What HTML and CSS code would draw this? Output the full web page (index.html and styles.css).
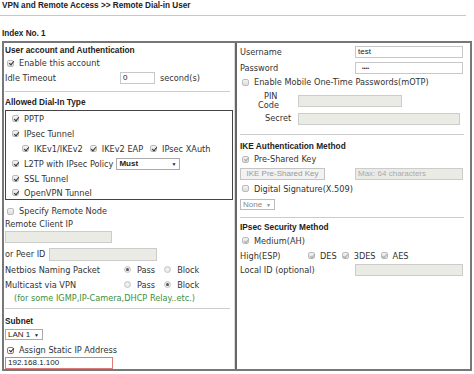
FILE: index.html
```html
<!DOCTYPE html>
<html lang="en">
<head>
  <meta charset="UTF-8">
  <title>Remote Dial-in User</title>
  <link rel="stylesheet" href="styles.css">
</head>
<body>
  <div class="title">VPN and Remote Access &gt;&gt; Remote Dial-in User</div>
  <div class="index">Index No. 1</div>

  <div class="panel">
    <!-- left column -->
    <div class="col left">
      <div class="head h1">User account and Authentication</div>
      <div class="row r14"><span class="cb on"></span>Enable this account</div>
      <div class="row r15">
        <span class="lbl w115">Idle Timeout</span>
        <span class="txt idle">0</span>
        <span class="unit">second(s)</span>
      </div>
      <div class="sep s1"></div>
      <div class="head h2">Allowed Dial-In Type</div>

      <div class="box">
        <div class="row r15"><span class="cb on"></span>PPTP</div>
        <div class="row r15"><span class="cb on"></span>IPsec Tunnel</div>
        <div class="row r15 sub">
          <span class="cb on"></span><span class="opt">IKEv1/IKEv2</span>
          <span class="cb on"></span><span class="opt">IKEv2 EAP</span>
          <span class="cb on"></span>IPsec XAuth
        </div>
        <div class="row r15">
          <span class="cb on"></span>L2TP with IPsec Policy
          <span class="sel must">Must<i>&#9660;</i></span>
        </div>
        <div class="row r15"><span class="cb on"></span>SSL Tunnel</div>
        <div class="row r13"><span class="cb on"></span>OpenVPN Tunnel</div>
      </div>

      <div class="row r14 mt4"><span class="cb"></span>Specify Remote Node</div>
      <div class="row r12">Remote Client IP</div>
      <div class="txt dis ip1"></div>
      <div class="row r14 peer">or Peer ID <span class="txt dis peerid"></span></div>
      <div class="row r15 mt1">
        <span class="lbl w119">Netbios Naming Packet</span>
        <span class="rd on"></span><span class="opt2">Pass</span>
        <span class="rd"></span>Block
      </div>
      <div class="row r15">
        <span class="lbl w119">Multicast via VPN</span>
        <span class="rd"></span><span class="opt2">Pass</span>
        <span class="rd on"></span>Block
      </div>
      <div class="row r12 note">(for some IGMP,IP-Camera,DHCP Relay..etc.)</div>
      <div class="sep s2"></div>
      <div class="head h3">Subnet</div>
      <div class="sel lan">LAN 1<i>&#9660;</i></div>
      <div class="row r14 mt3"><span class="cb on red"></span>Assign Static IP Address</div>
      <div class="txt ipaddr">192.168.1.100</div>
    </div>

    <!-- right column -->
    <div class="col right">
      <div class="row r15">
        <span class="lbl w115">Username</span>
        <span class="txt field">test</span>
      </div>
      <div class="row r15 mt1">
        <span class="lbl w115">Password</span>
        <span class="txt field dots">&bull;&bull;&bull;&bull;</span>
      </div>
      <div class="row r14"><span class="cb"></span>Enable Mobile One-Time Passwords(mOTP)</div>
      <div class="row r23">
        <span class="otp"><span class="pin">PIN</span><br>Code</span>
        <span class="txt dis pinbox"></span>
      </div>
      <div class="row r13">
        <span class="otp secret">Secret</span>
        <span class="txt dis secbox"></span>
      </div>
      <div class="sep s3"></div>
      <div class="head h4">IKE Authentication Method</div>
      <div class="row r14"><span class="cb on off"></span>Pre-Shared Key</div>
      <div class="row r15">
        <span class="btn">IKE Pre-Shared Key</span>
        <span class="txt dis field hint">Max: 64 characters</span>
      </div>
      <div class="row r15"><span class="cb"></span>Digital Signature(X.509)</div>
      <div class="sel none">None<i>&#9660;</i></div>
      <div class="sep s4"></div>
      <div class="head h5">IPsec Security Method</div>
      <div class="row r15"><span class="cb on off"></span>Medium(AH)</div>
      <div class="row r15">
        <span class="lbl w66">High(ESP)</span>
        <span class="cb on off"></span><span class="opt3">DES</span>
        <span class="cb on off"></span><span class="opt3">3DES</span>
        <span class="cb on off"></span>AES
      </div>
      <div class="row r14">
        <span class="lbl w115">Local ID (optional)</span>
        <span class="txt dis field"></span>
      </div>
    </div>
  </div>
</body>
</html>
```

FILE: styles.css
```css
/* base */
* { margin: 0; padding: 0; box-sizing: border-box; }
body {
  background: #fff;
  color: #333;
  font-family: "DejaVu Sans", Verdana, sans-serif;
  font-size: 8.2px;
}
.title {
  font-family: "Liberation Sans", Arial, sans-serif;
  font-weight: bold;
  font-size: 8.2px;
  color: #222;
  padding: 1px 0 0 2px;
  height: 16px;
  line-height: 10px;
  border-bottom: 1px solid #c8c8c8;
  width: 466px;
}
.index {
  font-family: "Liberation Sans", Arial, sans-serif;
  font-weight: bold;
  font-size: 8.2px;
  color: #222;
  padding: 13px 0 0 2px;
  height: 25px;
  line-height: 10px;
}
.panel {
  display: flex;
  margin-left: 2px;
  width: 470px;
  height: 330px;
  border: 2px solid #777;
}
.left {
  width: 233px;
  padding-left: 1px;
  padding-right: 2px;
  border-right: 2px solid #666;
  box-shadow: -1px 0 0 #ddd inset;
}
.right {
  flex: 1;
  padding-left: 3px;
  padding-right: 6px;
  padding-top: 1px;
}

/* rows */
.row { display: flex; align-items: center; white-space: nowrap; }
.r12 { height: 12px; }
.r13 { height: 13px; }
.r14 { height: 14px; }
.r15 { height: 15px; }
.r23 { height: 23px; }
.mt1 { margin-top: 1px; }
.mt3 { margin-top: 3px; }
.mt4 { margin-top: 4px; }
.lbl { display: inline-block; }
.w66 { width: 66px; }
.w115 { width: 115px; }
.w119 { width: 119px; }

.head {
  font-family: "Liberation Sans", Arial, sans-serif;
  font-weight: bold;
  font-size: 8.3px;
  color: #222;
  display: flex;
  align-items: center;
}
.h1 { height: 13px; }
.h2 { height: 14px; margin-top: 3px; }
.h3 { height: 12px; margin-top: 6px; }
.h4 { height: 12px; margin-top: 5px; }
.h5 { height: 12px; margin-top: 3px; }

.sep { height: 1px; background: #ccc; }
.s1 { margin-top: 6px; margin-right: 3px; }
.s2 { margin-top: 4px; margin-right: 3px; }
.s3 { margin-top: 9px; }
.s4 { margin-top: 7px; }

/* inner box */
.box {
  margin-top: 1px;
  width: 228px;
  border: 1px solid #444;
  padding-left: 4px;
}
.sub { padding-left: 10px; }
.opt { margin-right: 5px; }
.opt2 { margin-right: 9px; }
.opt3 { margin-right: 3px; }

/* checkbox */
.cb {
  display: inline-block;
  width: 7px;
  height: 7px;
  margin: 0 5px 0 2px;
  border: 1px solid #bbb;
  border-radius: 2px;
  background: linear-gradient(#f4f4f4, #dcdcdc);
  position: relative;
  flex: none;
}
.cb.on::after {
  content: "";
  position: absolute;
  left: 1.5px;
  top: -0.5px;
  width: 2px;
  height: 4px;
  border: solid #333;
  border-width: 0 1.5px 1.5px 0;
  transform: rotate(40deg);
}
.cb.off::after { border-color: #aaa; }
.cb.red { border-color: #d55; background: #fff; }

/* radio */
.rd {
  display: inline-block;
  width: 7px;
  height: 7px;
  border-radius: 50%;
  border: 1px solid #c4c4c4;
  background: radial-gradient(#f6f6f6, #dedede);
  margin-right: 6px;
  position: relative;
  flex: none;
}
.rd.on::after {
  content: "";
  position: absolute;
  left: 1px;
  top: 1px;
  width: 3px;
  height: 3px;
  border-radius: 50%;
  background: #555;
}

/* text fields */
.txt {
  display: inline-block;
  height: 12px;
  border: 1px solid #c8c8c8;
  background: #fff;
  font-family: "Liberation Sans", Arial, sans-serif;
  font-size: 8px;
  line-height: 10px;
  padding-left: 2px;
  color: #222;
}
.dis { background: #ebebe6; border-color: #ccc; }
.idle { width: 35px; }
.unit { margin-left: 5px; }
.field { width: 108px; height: 12px; }
.dots { font-size: 5px; letter-spacing: 0; padding-left: 6px; }
.ip1 { width: 107px; margin-top: 1px; }
.peer { margin-top: 2px; }
.peerid { width: 108px; margin-left: 4px; height: 13px; }
.note { color: #3e8e3e; padding-left: 9px; }
.ipaddr { width: 108px; border-color: #e07a7a; }
.pinbox { width: 104px; }
.secbox { width: 162px; }
.otp { display: inline-block; width: 58px; padding-left: 18px; line-height: 9px; }
.pin { padding-left: 6px; }
.secret { padding-left: 25px; }

/* select + button */
.sel {
  display: inline-flex;
  align-items: center;
  justify-content: space-between;
  height: 11px;
  border: 1px solid #aaa;
  background: #fff;
  font-family: "Liberation Sans", Arial, sans-serif;
  font-size: 8px;
  color: #222;
  padding: 0 3px 0 2px;
}
.sel i { font-style: normal; font-size: 5px; }
.must { width: 64px; margin-left: 3px; height: 12px; font-weight: bold; }
.lan { width: 38px; margin-top: 2px; }
.none { width: 35px; margin-top: 3px; color: #888; border-color: #bbb; }
.btn {
  display: inline-flex;
  align-items: center;
  justify-content: center;
  width: 85px;
  height: 12px;
  margin-right: 30px;
  border: 1px solid #c4c4c4;
  background: #f2f2f2;
  font-family: "Liberation Sans", Arial, sans-serif;
  font-size: 8px;
  color: #999;
}
.hint { color: #aaa; }
```
